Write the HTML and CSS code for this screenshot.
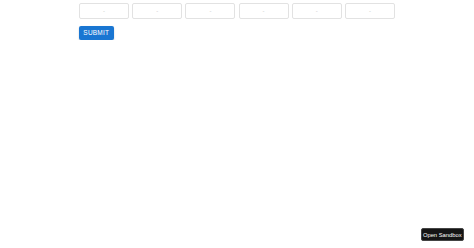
FILE: index.html
```html
<!DOCTYPE html>
<html>
<head>
<meta charset="utf-8">
<link rel="stylesheet" href="styles.css">
</head>
<body>
<div class="app">
  <form class="otp-form">
    <div class="otp-row">
      <input class="otp-box" type="text" placeholder="-">
      <input class="otp-box" type="text" placeholder="-">
      <input class="otp-box" type="text" placeholder="-">
      <input class="otp-box" type="text" placeholder="-">
      <input class="otp-box" type="text" placeholder="-">
      <input class="otp-box" type="text" placeholder="-">
    </div>
    <button class="submit-btn" type="button">SUBMIT</button>
  </form>
</div>
<a class="sandbox-btn">Open Sandbox</a>
</body>
</html>
```

FILE: styles.css
```css
html, body {
  margin: 0;
  padding: 0;
  background: #ffffff;
  font-family: "Liberation Sans", Arial, sans-serif;
}
.app {
  display: flex;
  justify-content: center;
  padding-top: 3px;
}
.otp-form {
  width: 316px;
  display: flex;
  flex-direction: column;
  align-items: flex-start;
  gap: 7px;
}
.otp-row {
  display: flex;
  gap: 3.2px;
  width: 100%;
}
.otp-box {
  box-sizing: border-box;
  width: 50px;
  height: 15.5px;
  margin: 0;
  padding: 0;
  border: 1px solid #e2e2e2;
  border-radius: 2px;
  text-align: center;
  font-family: "Liberation Sans", Arial, sans-serif;
  font-size: 6px;
  color: #333;
  background: #fff;
  outline: none;
}
.otp-box::placeholder {
  color: #c8c8c8;
}
.submit-btn {
  box-sizing: border-box;
  width: 34.5px;
  height: 14.5px;
  margin: 0;
  padding: 0;
  border: none;
  border-radius: 2px;
  background: #1976d2;
  color: #fff;
  font-family: "Liberation Sans", Arial, sans-serif;
  font-size: 6.5px;
  font-weight: 400;
  letter-spacing: 0.2px;
  box-shadow: 0 1px 2px rgba(0,0,0,0.2);
}
.sandbox-btn {
  position: fixed;
  right: 10px;
  bottom: 7px;
  box-sizing: border-box;
  width: 43.5px;
  height: 13px;
  display: flex;
  align-items: center;
  justify-content: center;
  background: #151515;
  color: #fff;
  border-radius: 2px;
  font-family: "Liberation Sans", Arial, sans-serif;
  font-size: 5.8px;
  border: 0.5px solid #444;
}
```
